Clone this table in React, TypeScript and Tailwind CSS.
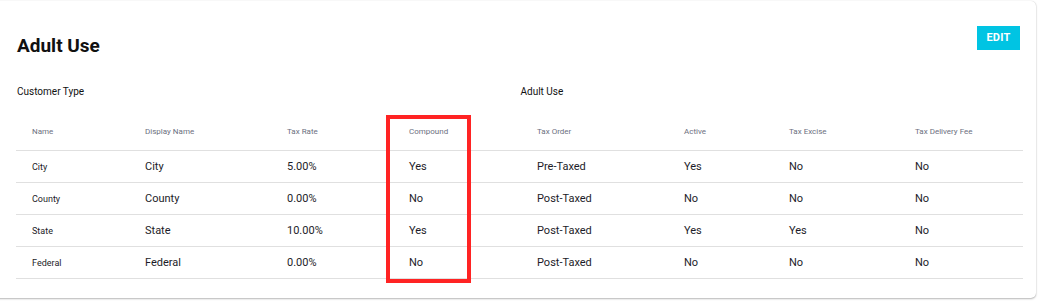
import React from "react";

type Row = {
  name: string;
  display: string;
  rate: string;
  compound: string;
  order: string;
  active: string;
  excise: string;
  delivery: string;
};

const rows: Row[] = [
  { name: "City", display: "City", rate: "5.00%", compound: "Yes", order: "Pre-Taxed", active: "Yes", excise: "No", delivery: "No" },
  { name: "County", display: "County", rate: "0.00%", compound: "No", order: "Post-Taxed", active: "No", excise: "No", delivery: "No" },
  { name: "State", display: "State", rate: "10.00%", compound: "Yes", order: "Post-Taxed", active: "Yes", excise: "Yes", delivery: "No" },
  { name: "Federal", display: "Federal", rate: "0.00%", compound: "No", order: "Post-Taxed", active: "No", excise: "No", delivery: "No" },
];

const headers = ["Name", "Display Name", "Tax Rate", "Compound", "Tax Order", "Active", "Tax Excise", "Tax Delivery Fee"];

const cols = "grid grid-cols-[129px_142px_122px_128px_147px_105px_126px_108px]";

export default function App() {
  return (
    <div className="min-h-screen bg-white pt-px pr-1 font-['Roboto','Liberation_Sans',sans-serif]">
      <div className="relative -ml-1 h-[297px] rounded-r-[5px] bg-white pl-[20px] pr-[13px] shadow-[0_1px_2px_rgba(0,0,0,0.28),0_0_1px_rgba(0,0,0,0.18)]">
        <div className="flex items-start justify-between pt-[25px]">
          <h1 className="ml-px mt-[6px] text-[19px] font-bold leading-[28px] text-[#111]">Adult Use</h1>
          <button className="mr-[3px] h-6 w-[43px] bg-[#00c4e3] text-[11px] font-bold tracking-[0.2px] text-white">
            EDIT
          </button>
        </div>

        <div className="mt-[25px] grid grid-cols-2 text-[10px] leading-[14px] text-[#111]">
          <div className="pl-px">Customer Type</div>
          <div className="pl-px">Adult Use</div>
        </div>

        <div className="mt-[14px]">
          <div className={`${cols} h-[38px] items-center border-b border-[#e0e0e0] text-[8px] text-[#6c6f80]`}>
            {headers.map((h, i) => (
              <div key={h} className={i === 0 ? "pl-4" : ""}>
                {h}
              </div>
            ))}
          </div>
          {rows.map((r) => (
            <div
              key={r.name}
              className={`${cols} h-[32px] items-center border-b border-[#e0e0e0] pt-[2px] text-[11px] text-[#1c1c28]`}
            >
              <div className="pl-4 text-[9px]">{r.name}</div>
              <div>{r.display}</div>
              <div>{r.rate}</div>
              <div>{r.compound}</div>
              <div>{r.order}</div>
              <div>{r.active}</div>
              <div>{r.excise}</div>
              <div>{r.delivery}</div>
            </div>
          ))}
        </div>

        {/* highlight around the Compound column */}
        <div className="pointer-events-none absolute left-[390px] top-[114px] h-[168px] w-[85px] border-4 border-[#ff2323]" />
      </div>
    </div>
  );
}
